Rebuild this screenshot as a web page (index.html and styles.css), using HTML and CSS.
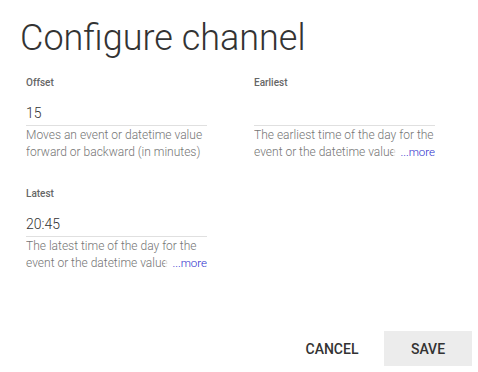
FILE: index.html
```html
<!DOCTYPE html>
<html>
<head>
<meta charset="utf-8">
<link rel="stylesheet" href="styles.css">
</head>
<body>
<div class="dialog">
  <h1 class="title">Configure channel</h1>
  <div class="fields">
    <div class="field">
      <div class="label">Offset</div>
      <div class="input">15</div>
      <div class="help">Moves an event or datetime value forward or backward (in minutes)</div>
    </div>
    <div class="field">
      <div class="label">Earliest</div>
      <div class="input"></div>
      <div class="help">The earliest time of the day for the event or the datetime value can be shifted to<a class="more">...more</a></div>
    </div>
    <div class="field">
      <div class="label">Latest</div>
      <div class="input">20:45</div>
      <div class="help">The latest time of the day for the event or the datetime value can be shifted to<a class="more">...more</a></div>
    </div>
  </div>
  <div class="actions">
    <button class="btn">CANCEL</button>
    <button class="btn btn-save">SAVE</button>
  </div>
</div>
</body>
</html>
```

FILE: styles.css
```css
html, body {
  margin: 0;
  padding: 0;
  background: #fff;
}
body {
  font-family: Roboto, "Liberation Sans", sans-serif;
  color: #212121;
  width: 478px;
  height: 372px;
  overflow: hidden;
}
.dialog {
  padding: 17px 6px 0 20px;
}
.title {
  margin: 0;
  font-size: 36px;
  font-weight: 300;
  line-height: 42px;
  color: #333;
  letter-spacing: 0;
}
.fields {
  display: grid;
  grid-template-columns: 181px 181px;
  column-gap: 47px;
  row-gap: 26px;
  padding-left: 6px;
  margin-top: 17px;
}
.label {
  font-size: 10px;
  font-weight: 500;
  color: #666;
  line-height: 14px;
}
.input {
  margin-top: 14px;
  height: 21px;
  font-size: 14px;
  font-weight: 300;
  color: #333;
  line-height: 18px;
  border-bottom: 1px solid #e0e0e0;
}
.help {
  position: relative;
  margin-top: 1px;
  font-size: 12px;
  font-weight: 300;
  color: #757575;
  line-height: 17px;
  height: 34px;
  overflow: hidden;
}
.more {
  position: absolute;
  right: 0;
  top: 17px;
  line-height: 17px;
  padding-left: 7px;
  background: linear-gradient(to right, rgba(255,255,255,0.5), #fff 5px);
  color: #2a2acc;
  font-size: 11.5px;
  font-weight: 300;
}
.actions {
  display: flex;
  justify-content: flex-end;
  gap: 8px;
  margin-top: 59px;
}
.btn {
  font-family: Roboto, "Liberation Sans", sans-serif;
  font-size: 14px;
  font-weight: 500;
  color: #333;
  background: transparent;
  border: 0;
  height: 35px;
  width: 88px;
  padding: 0;
}
.btn-save {
  background: #ececec;
}
```
